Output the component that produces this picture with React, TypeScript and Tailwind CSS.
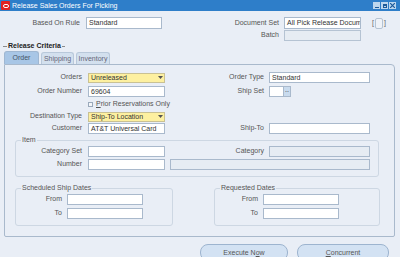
import React from 'react';

const font = { fontFamily: '"Liberation Sans", Arial, sans-serif' };

const Input: React.FC<{ w: string; value?: string; disabled?: boolean }> = ({ w, value, disabled }) => (
  <div
    className={`${w} h-[11px] border border-[#a9b9cc] ${disabled ? 'bg-[#e6ecf3]' : 'bg-white'} text-[7px] leading-[9px] pl-[2px] text-[#333] whitespace-nowrap overflow-hidden shrink-0`}
  >
    {value}
  </div>
);

const Select: React.FC<{ value: string }> = ({ value }) => (
  <div className="w-[77px] h-[10px] border border-[#c9c193] bg-[#fdf0a0] flex items-center shrink-0">
    <span className="flex-1 text-[7px] leading-[8px] pl-[2px] text-[#333] whitespace-nowrap">{value}</span>
    <span className="w-[7px] h-full flex items-center justify-center">
      <svg width="5" height="3" viewBox="0 0 5 3"><path d="M0 0h5L2.5 3z" fill="#555" /></svg>
    </span>
  </div>
);

const Label: React.FC<{ w: string; text: string; gap?: string }> = ({ w, text, gap = 'mr-[6px]' }) => (
  <div className={`${w} ${gap} text-right text-[7px] text-[#555] whitespace-nowrap shrink-0`}>{text}</div>
);

const Group: React.FC<{ title: string; cls: string; children: React.ReactNode }> = ({ title, cls, children }) => (
  <div className={`relative border border-[#cdd7e3] rounded-[3px] ${cls}`}>
    <span className="absolute -top-[5px] left-[5px] bg-[#e9eef6] px-[1px] text-[7px] leading-[8px] text-[#555]">{title}</span>
    {children}
  </div>
);

export default function App() {
  return (
    <div className="w-[400px] h-[257px] bg-[#e9eef6] overflow-hidden relative" style={font}>
      {/* title bar */}
      <div className="h-[11px] bg-[#2e7ec9] flex items-center">
        <div className="ml-[1px] w-[9px] h-[9px] bg-[#e02020] rounded-[1px] flex items-center justify-center">
          <div className="w-[6px] h-[4px] border border-white rounded-[2px]" />
        </div>
        <span className="ml-[2px] text-[7px] leading-[9px] text-white whitespace-nowrap">Release Sales Orders For Picking</span>
        <div className="ml-auto mr-[4px] flex gap-[1px]">
          <div className="w-[7px] h-[7px] bg-[#bcd6ee] flex items-end justify-center pb-[1px]">
            <div className="w-[4px] h-[1px] bg-[#1c5a9a]" />
          </div>
          <div className="w-[7px] h-[7px] bg-[#bcd6ee] flex items-center justify-center">
            <div className="w-[4px] h-[4px] border border-[#1c5a9a] border-t-2" />
          </div>
          <div className="w-[7px] h-[7px] bg-[#bcd6ee] flex items-center justify-center">
            <svg width="5" height="5" viewBox="0 0 5 5"><path d="M0 0L5 5M5 0L0 5" stroke="#1c5a9a" strokeWidth="1.2" /></svg>
          </div>
        </div>
      </div>

      {/* header fields */}
      <div className="mt-[6px] flex items-center h-[12px]">
        <Label w="w-[80px]" text="Based On Rule" />
        <div className="w-[76px] h-[12px] border border-[#a9b9cc] bg-white text-[7px] leading-[10px] pl-[2px] text-[#333]">Standard</div>
        <Label w="w-[117px]" text="Document Set" gap="mr-[5px]" />
        <div className="w-[77px] h-[12px] border border-[#a9b9cc] bg-white text-[7px] leading-[10px] pl-[2px] text-[#333] whitespace-nowrap overflow-hidden">All Pick Release Docum</div>
        <div className="ml-[11px] flex items-center gap-[1px] text-[7px] leading-[8px] text-[#666]">
          <span>[</span>
          <div className="w-[8px] h-[11px] border border-[#b5c3d3] rounded-[2px] bg-[#eef2f8]" />
          <span>]</span>
        </div>
      </div>
      <div className="mt-[1px] flex items-center h-[11px]">
        <Label w="w-[279px]" text="Batch" gap="mr-[5px]" />
        <div className="w-[77px] h-[11px] border border-[#b5c3d3] bg-[#e6ecf3]" />
      </div>

      {/* release criteria */}
      <div className="mt-[1px] flex items-center h-[8px]">
        <div className="ml-[3px] w-[4px] h-px bg-[#8a8a8a]" />
        <span className="mx-[1px] text-[7px] leading-[8px] font-bold text-[#222]">Release Criteria</span>
        <div className="w-[3px] h-px bg-[#8a8a8a]" />
      </div>

      {/* tabs */}
      <div className="mt-[1px] ml-[4px] flex gap-[2px] h-[13px] items-end">
        <div className="w-[35px] h-[13px] bg-[#a8c6e6] border border-[#9fb7d2] border-b-0 rounded-t-[3px] text-[7px] leading-[12px] text-center text-[#456]">Order</div>
        <div className="w-[33px] h-[12px] bg-[#d3e0ee] border border-[#b8c8da] border-b-0 rounded-t-[3px] text-[7px] leading-[11px] text-center text-[#667]">Shipping</div>
        <div className="w-[34px] h-[12px] bg-[#d3e0ee] border border-[#b8c8da] border-b-0 rounded-t-[3px] text-[7px] leading-[11px] text-center text-[#667]">Inventory</div>
      </div>

      {/* tab panel */}
      <div className="ml-[4px] w-[391px] h-[173px] border border-[#a9b9cc] rounded-tr-[4px] rounded-b-[2px] pt-[7px]">
        <div className="flex items-center h-[11px]">
          <Label w="w-[77px]" text="Orders" />
          <Select value="Unreleased" />
          <Label w="w-[99px]" text="Order Type" gap="mr-[5px]" />
          <Input w="w-[101px]" value="Standard" />
        </div>
        <div className="mt-[3px] flex items-center h-[11px]">
          <Label w="w-[77px]" text="Order Number" />
          <Input w="w-[77px]" value="69604" />
          <Label w="w-[99px]" text="Ship Set" gap="mr-[5px]" />
          <Input w="w-[15px]" />
          <div className="w-[7px] h-[11px] border border-[#a9b9cc] border-l-0 bg-[#c9dbee] text-[7px] leading-[6px] text-center text-[#333]">..</div>
        </div>
        <div className="mt-[3px] flex items-center h-[8px]">
          <div className="ml-[83px] w-[5px] h-[5px] border border-[#9aa9bb] bg-[#f4f6f9]" />
          <span className="ml-[3px] text-[7px] text-[#555] whitespace-nowrap"><span className="underline">P</span>rior Reservations Only</span>
        </div>
        <div className="mt-[3px] flex items-center h-[11px]">
          <Label w="w-[77px]" text="Destination Type" />
          <Select value="Ship-To Location" />
        </div>
        <div className="mt-[1px] flex items-center h-[11px]">
          <Label w="w-[77px]" text="Customer" />
          <Input w="w-[77px]" value="AT&T Universal Card" />
          <Label w="w-[99px]" text="Ship-To" gap="mr-[5px]" />
          <Input w="w-[101px]" />
        </div>

        <Group title="Item" cls="mt-[6px] ml-[10px] w-[364px] h-[37px] pt-[5px]">
          <div className="flex items-center h-[11px]">
            <Label w="w-[66px]" text="Category Set" />
            <Input w="w-[77px]" />
            <Label w="w-[99px]" text="Category" gap="mr-[5px]" />
            <Input w="w-[101px]" disabled />
          </div>
          <div className="mt-[2px] flex items-center h-[11px]">
            <Label w="w-[66px]" text="Number" />
            <Input w="w-[77px]" />
            <div className="w-[5px]" />
            <Input w="w-[200px]" disabled />
          </div>
        </Group>

        <div className="mt-[11px] ml-[10px] flex gap-[41px]">
          <Group title="Scheduled Ship Dates" cls="w-[158px] h-[38px] pt-[5px]">
            <div className="flex items-center h-[11px]">
              <Label w="w-[46px]" text="From" gap="mr-[5px]" />
              <Input w="w-[76px]" />
            </div>
            <div className="mt-[3px] flex items-center h-[11px]">
              <Label w="w-[46px]" text="To" gap="mr-[5px]" />
              <Input w="w-[76px]" />
            </div>
          </Group>
          <Group title="Requested Dates" cls="w-[166px] h-[38px] pt-[5px]">
            <div className="flex items-center h-[11px]">
              <Label w="w-[43px]" text="From" gap="mr-[5px]" />
              <Input w="w-[76px]" />
            </div>
            <div className="mt-[3px] flex items-center h-[11px]">
              <Label w="w-[43px]" text="To" gap="mr-[5px]" />
              <Input w="w-[76px]" />
            </div>
          </Group>
        </div>
      </div>

      {/* buttons */}
      <div className="mt-[7px] ml-[200px] flex gap-[9px]">
        <div className="w-[88px] h-[17px] rounded-[8px] border border-[#9db4cf] bg-[#d3e2f3] text-[7px] leading-[15px] text-center text-[#555]">
          Execute N<span className="underline">o</span>w
        </div>
        <div className="w-[92px] h-[17px] rounded-[8px] border border-[#9db4cf] bg-[#d3e2f3] text-[7px] leading-[15px] text-center text-[#555]">
          <span className="underline">C</span>oncurrent
        </div>
      </div>
    </div>
  );
}
